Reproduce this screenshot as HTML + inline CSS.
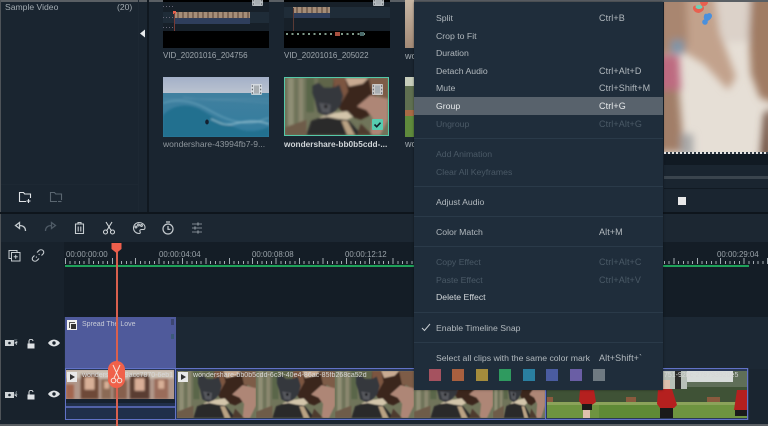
<!DOCTYPE html>
<html><head><meta charset="utf-8">
<style>
html,body{margin:0;padding:0;background:#1a2530}
#r{position:relative;width:768px;height:426px;overflow:hidden;background:#1a2530;font-family:"Liberation Sans",sans-serif;font-size:9px;color:#aeb6bc}
#r div,#r svg,#r span.a{position:absolute}
.t{white-space:nowrap;line-height:12px;filter:blur(.3px)}
.m{left:22px;white-space:nowrap;line-height:12px;color:#b2b9be;font-size:8.7px;filter:blur(.25px);margin-top:-.3px}
.s{left:185px;white-space:nowrap;line-height:12px;color:#b2b9be;font-size:9px;letter-spacing:.1px;filter:blur(.25px);margin-top:-.3px}
.l{left:0;width:249px;height:1px;background:#2a3a49}
.c{top:367px;width:12px;height:12px}
.ruler{top:249px;font-size:7.9px;color:#9aa3a9;white-space:nowrap;line-height:12px;filter:blur(.3px)}
</style></head><body>
<div id="r">
<svg width="0" height="0" style="left:0;top:0">
<defs>
<filter id="b1" x="-10%" y="-10%" width="120%" height="120%"><feGaussianBlur stdDeviation="1.100"/></filter>
<filter id="b4" x="-30%" y="-30%" width="160%" height="160%"><feGaussianBlur stdDeviation="4"/></filter>
<symbol id="dog" viewBox="0 0 106 60" preserveAspectRatio="none">
<rect width="106" height="60" fill="#70745a"/>
<g filter="url(#b1)">
<rect x="3" y="0" width="6" height="60" fill="#8f8e74"/>
<rect x="14" y="0" width="5" height="60" fill="#8a876e"/>
<rect x="22" y="0" width="8" height="36" fill="#5a664a"/>
<path d="M34 0h16l-4 20-12 6z" fill="#5f654a"/>
<path d="M50 0h44v36l-16 8-18-6-12-18z" fill="#3a281f"/>
<path d="M50 0h12l3 14-7 12-8-8z" fill="#7b5540"/>
<path d="M62 0h24l-6 6-14 3z" fill="#c8aa92"/>
<path d="M86 0h20v24l-10-6-6 0z" fill="#7d5c47"/>
<path d="M74 30l14-12 18 4v22l-8 16H88l2-18-6-8z" fill="#ae8676"/>
<path d="M0 52l22-8 0 16H0z" fill="#6e5c48"/>
<path d="M22 60l5-15 18-6 20 5 14 16z" fill="#2a292b"/>
<path d="M36 41l12-4 16-2 6 6-6 3-10-1-10-2-8 1z" fill="#d3c5aa"/>
<path d="M58 45l6 0 8 15H64z" fill="#b9a283"/>
<path d="M78 48l12 12H74z" fill="#4e3a2e"/>
<path d="M28 8l7-3 5 5 10 0 6-3 4 12-3 10-7 8-8 3-8-4-3-12-3-8z" fill="#35373d"/>
<path d="M35 26l12 2-1 9-8-1z" fill="#55565c"/>
<circle cx="42" cy="30" r="1.700" fill="#0c0c0c"/>
</g>
</symbol>
<symbol id="film" viewBox="0 0 11 11">
<rect width="11" height="11" rx="1" fill="#dfe3e6" opacity=".8"/>
<rect x="3" y="1.500" width="5" height="8" fill="#a8aeb2"/>
<g fill="#6a6f74"><rect x=".8" y="1.200" width="1.200" height="1.600"/><rect x=".8" y="4.700" width="1.200" height="1.600"/><rect x=".8" y="8.200" width="1.200" height="1.600"/><rect x="9" y="1.200" width="1.200" height="1.600"/><rect x="9" y="4.700" width="1.200" height="1.600"/><rect x="9" y="8.200" width="1.200" height="1.600"/></g>
</symbol>
<symbol id="girls" viewBox="0 0 110 28" preserveAspectRatio="none">
<rect width="110" height="28" fill="#b0978a"/>
<g filter="url(#b1)">
<rect y="0" width="110" height="8" fill="#cdc3b6"/>
<rect x="15" y="4" width="18" height="24" fill="#6e4a38"/><rect x="19" y="7" width="10" height="12" fill="#d8b097"/>
<rect x="36" y="9" width="10" height="19" fill="#8b6a55"/><rect x="39" y="11" width="5" height="7" fill="#d8b097"/>
<rect x="65" y="5" width="20" height="23" fill="#5a3c30"/><rect x="70" y="8" width="10" height="12" fill="#d9ae97"/>
<rect x="90" y="8" width="14" height="20" fill="#9a6c5a"/><rect x="94" y="10" width="6" height="8" fill="#d8b097"/>
<rect x="0" y="14" width="8" height="14" fill="#a3664f"/>
<rect x="48" y="10" width="14" height="18" fill="#86604e"/>
</g>
</symbol>
</defs>
</svg>

<!-- frame -->
<div style="left:0;top:0;width:768px;height:2px;background:#5a5f64"></div>
<div style="left:0;top:0;width:1px;height:426px;background:#4e5358"></div>

<!-- library panel -->
<div style="left:147px;top:0;width:2px;height:212px;background:#101820"></div>
<div style="left:1px;top:184px;width:137px;height:1px;background:#1d2833"></div>
<div style="left:138px;top:0;width:1px;height:212px;background:#1d2833"></div>
<div class="t" style="left:5px;top:1px;color:#a3abb1;font-size:8.600px">Sample Video</div>
<div class="t" style="left:117px;top:1px;color:#a3abb1;font-size:8.600px">(20)</div>
<svg style="left:139px;top:29px" width="7" height="9"><path d="M6 .5v8L1 4.500z" fill="#e8ebed"/></svg>
<svg style="left:18px;top:190px" width="14" height="14" fill="none" stroke="#dfe3e6" stroke-width="1.100"><path d="M8 11.500H1.500V2.500h4l1.200 1.500h5.800v4"/><path d="M10.500 9v4M8.500 11h4"/></svg>
<svg style="left:49px;top:190px" width="14" height="14" fill="none" stroke="#5a6670" stroke-width="1.100"><path d="M8 11.500H1.500V2.500h4l1.200 1.500h5.800v6"/><path d="M9 11.500h3.500"/></svg>

<!-- thumbnails top row -->
<div style="left:163px;top:0;width:106px;height:48px;background:#000">
 <div style="left:0;top:2px;width:106px;height:29px;background:#172029"></div>
 <div style="left:0;top:12px;width:106px;height:11px;background:#1f2c38"></div>
 <div style="left:11px;top:12px;width:76px;height:6px;background:repeating-linear-gradient(90deg,#a58d78 0 3px,#7d6656 3px 5px)"></div>
 <div style="left:11px;top:18px;width:76px;height:6px;background:#2f3e5c"></div>
 <div style="left:10px;top:11px;width:3px;height:3px;background:#e8604c"></div>
 <div style="left:11px;top:13px;width:1px;height:18px;background:#7a3b35"></div>
 <div style="left:0;top:6px;width:10px;height:1px;background:repeating-linear-gradient(90deg,#667 0 1px,transparent 1px 3px)"></div>
 <div style="left:0;top:17px;width:10px;height:1px;background:repeating-linear-gradient(90deg,#667 0 1px,transparent 1px 3px)"></div>
 <div style="left:0;top:27px;width:10px;height:1px;background:repeating-linear-gradient(90deg,#667 0 1px,transparent 1px 3px)"></div>
</div>
<svg style="left:252px;top:0" width="11" height="6"><use href="#film" y="-5" width="11" height="11"/></svg>
<div style="left:284px;top:0;width:106px;height:48px;background:#000">
 <div style="left:0;top:2px;width:106px;height:29px;background:#172029"></div>
 <div style="left:0;top:7px;width:106px;height:11px;background:#1f2c38"></div>
 <div style="left:9px;top:7px;width:37px;height:6px;background:repeating-linear-gradient(90deg,#a58d78 0 3px,#7d6656 3px 5px)"></div>
 <div style="left:9px;top:13px;width:37px;height:5px;background:#2f3e5c"></div>
 <div style="left:9px;top:8px;width:1px;height:23px;background:#5a3a35"></div>
 <div style="left:2px;top:33px;width:80px;height:2px;background:repeating-linear-gradient(90deg,#7f9a8a 0 2px,transparent 2px 5.500px)"></div>
 <div style="left:51px;top:32px;width:5px;height:4px;background:#a8503f"></div>
 <div style="left:76px;top:32px;width:4px;height:4px;background:#4a6a6a"></div>
</div>
<svg style="left:373px;top:0" width="11" height="6"><use href="#film" y="-5" width="11" height="11"/></svg>
<div class="t" style="left:163px;top:49.500px;color:#a0a8ae;font-size:8px">VID_20201016_204756</div>
<div class="t" style="left:284px;top:49.500px;color:#a0a8ae;font-size:8px">VID_20201016_205022</div>

<!-- third column sliver -->
<div style="left:405px;top:0;width:9px;height:48px;background:linear-gradient(#c7b6a4,#a38a76)"></div>
<div class="t" style="left:405px;top:49.500px;width:9px;overflow:hidden;color:#a0a8ae">wo</div>
<div style="left:405px;top:77px;width:9px;height:60px;background:linear-gradient(#c7cdbb 0 15%,#5f6f50 15% 55%,#a86a45 55% 65%,#5f8a3c 65%)"></div>
<div class="t" style="left:405px;top:138px;width:9px;overflow:hidden;color:#a0a8ae">wo</div>

<!-- ocean thumb -->
<svg style="left:163px;top:77px" width="106" height="60" viewBox="0 0 106 60">
<defs><linearGradient id="sky" x1="0" y1="0" x2="0" y2="1"><stop offset="0" stop-color="#a3b0c8"/><stop offset="1" stop-color="#bcc4d0"/></linearGradient>
<linearGradient id="sea" x1="0" y1="0" x2="0" y2="1"><stop offset="0" stop-color="#41809f"/><stop offset="1" stop-color="#327c9e"/></linearGradient></defs>
<rect width="106" height="17" fill="url(#sky)"/><rect y="16" width="106" height="44" fill="url(#sea)"/>
<g filter="url(#b1)">
<path d="M0 38C12 26 28 26 42 35s24 13 34 17 20 2 30-2v10H0z" fill="#21708f"/>
<path d="M0 26c14-4 26-2 36 2s22 14 40 17 20-2 30-4" fill="none" stroke="#6ea6bd" stroke-width="1.400" opacity=".7"/>
<path d="M48 42c8 3 12 7 22 5s20-5 36 0" fill="none" stroke="#a9cfdc" stroke-width="1.500" opacity=".7"/>
<path d="M0 22h106M20 20c20 4 40 2 86 6" fill="none" stroke="#5c93ae" stroke-width="1" opacity=".6"/>
</g>
<ellipse cx="44" cy="45" rx="1.800" ry="2.500" fill="#142030"/>
</svg>
<svg style="left:251px;top:84px" width="11" height="11"><use href="#film" width="11" height="11"/></svg>
<div class="t" style="left:163px;top:138px;color:#8f979d;font-size:8.500px">wondershare-43994fb7-9...</div>

<!-- dog thumb -->
<div style="left:284px;top:77px;width:103px;height:57px;border:1.500px solid #55c9a8;overflow:hidden">
<svg style="left:0;top:0" width="103" height="57"><use href="#dog" width="103" height="57"/></svg>
</div>
<svg style="left:372px;top:84px" width="11" height="11"><use href="#film" width="11" height="11"/></svg>
<div style="left:372px;top:119px;width:11px;height:11px;background:#57cdb0;border-radius:1px"></div>
<svg style="left:372px;top:119px" width="11" height="11" fill="none" stroke="#10202a" stroke-width="1.600"><path d="M2.500 5.500l2.200 2.200 3.800-4"/></svg>
<div class="t" style="left:284px;top:138px;color:#d0d5d8;font-size:8.300px;font-weight:bold">wondershare-bb0b5cdd-...</div>

<!-- preview -->
<div style="left:664px;top:2px;width:104px;height:150px;overflow:hidden;background:#e6dfd6">
<svg style="left:0;top:0" width="104" height="150" viewBox="0 0 104 150">
<rect width="104" height="150" fill="#e6dfd6"/>
<g filter="url(#b4)">
<path d="M48-10h50v50H60z" fill="#dcd2c9"/>
<path d="M-10-10H50L56 31 72 75 64 88 40 62 20 50H-10z" fill="#c2a28c"/>
<path d="M-10-10H22L24 40 20 52H-10z" fill="#a9866f"/>
<path d="M87-10h27v110l-6 0-12-4-9-24-2-40z" fill="#a07b63"/>
<path d="M-10 88H15L20 150H-10z" fill="#a17e68"/>
<path d="M-10 53H15L17 88H-10z" fill="#bd6a80"/>
<path d="M7 38h13v14H7z" fill="#7f95a8"/>
<path d="M17 132h12v22H17z" fill="#a8a8a8"/>
<path d="M100 112l8-6v50h-12z" fill="#6e5040"/>
</g>
<path d="M34 5c2-3 6-2 6 1s-3 4-5 5c-3 0-6-2-6-5s3-3 5-1z" fill="#e8604f"/>
<ellipse cx="35" cy="5" rx="3.500" ry="2" fill="#6fd0b6"/>
<path d="M43 12c3-2 5 0 5 2s-3 5-5 5c-2 0-4-3-3-5 0-2 2-3 3-2z" fill="#4a90dd"/>
<circle cx="41" cy="20" r="2.800" fill="#4a90dd"/>
<circle cx="40" cy="0" r="4" fill="#e8604f"/>
</svg>
</div>
<div style="left:664px;top:152px;width:104px;height:1.500px;background:repeating-linear-gradient(90deg,#e6e6e6 0 2px,#303a44 2px 4px)"></div>
<div style="left:664px;top:154px;width:104px;height:11px;background:#111a23"></div>
<div style="left:664px;top:176px;width:104px;height:3px;background:#3a444d"></div>
<div style="left:664px;top:188px;width:104px;height:1px;background:#111a23"></div>
<div style="left:678px;top:197px;width:8px;height:8px;background:#e8e8e8"></div>

<!-- timeline chrome -->
<div style="left:0;top:212px;width:768px;height:2px;background:#0e151c"></div>
<div style="left:1px;top:214px;width:767px;height:28px;background:#1c2732"></div>
<div style="left:1px;top:242px;width:767px;height:75px;background:#141d26"></div>
<div style="left:1px;top:242px;width:63px;height:178px;background:#18222c"></div>
<div style="left:1px;top:317px;width:767px;height:52px;background:#1c2834"></div>
<div style="left:1px;top:369px;width:767px;height:51px;background:#1a2530"></div>
<div style="left:1px;top:317px;width:63px;height:103px;background:#18222c"></div>
<div style="left:0;top:420px;width:768px;height:4px;background:#1a2530"></div>
<div style="left:0;top:424px;width:768px;height:2px;background:#5a5f64"></div>

<!-- toolbar icons -->
<svg style="left:14px;top:220px" width="14" height="14" fill="none" stroke="#c6ccd0" stroke-width="1.300"><path d="M1.500 5.500L5.500 2.500v6zM5 5.500c4 0 6.500 1.500 6.500 5.500"/></svg>
<svg style="left:43px;top:220px" width="14" height="14" fill="none" stroke="#4f5b66" stroke-width="1.300"><path d="M12.500 5.500L8.500 2.500v6zM9 5.500c-4 0-6.500 1.500-6.500 5.500"/></svg>
<svg style="left:73px;top:221px" width="13" height="14" fill="none" stroke="#c6ccd0" stroke-width="1.100"><path d="M2 3h9M5 3V1.500h3V3M2.500 3v9.500h8V3M5.200 5.500v5M7.800 5.500v5"/></svg>
<svg style="left:102px;top:221px" width="14" height="14" fill="none" stroke="#d2d7da" stroke-width="1.100"><path d="M4 1l5.500 9M10 1L4.500 10"/><circle cx="3.500" cy="11" r="2"/><circle cx="10.500" cy="11" r="2"/></svg>
<svg style="left:132px;top:221px" width="14" height="14" fill="none" stroke="#c6ccd0" stroke-width="1.100"><path d="M7 1.500a5.500 5.500 0 1 0 0 11c1.500 0 1.500-1.200 1-2-.5-1 0-2 1.500-2h2c1 0 1.500-1 1.500-2C13 3.500 10 1.500 7 1.500z"/><circle cx="4" cy="6" r=".9"/><circle cx="6.500" cy="4" r=".9"/><circle cx="9.500" cy="4.500" r=".9"/></svg>
<svg style="left:161px;top:221px" width="14" height="14" fill="none" stroke="#c6ccd0" stroke-width="1.200"><circle cx="7" cy="8" r="5"/><path d="M5 1h4M7 5v3.300h2.500"/></svg>
<svg style="left:190px;top:222px" width="14" height="12" fill="none" stroke="#7b858d" stroke-width="1"><path d="M2 2h10M2 6h10M2 10h10"/><path d="M8 .5v3M5 4.500v3M8 8.500v3" stroke-width="1.600"/></svg>

<!-- timeline left tools -->
<svg style="left:8px;top:249px" width="13" height="13" fill="none" stroke="#c6ccd0" stroke-width="1"><path d="M3 9.500H1V1.500h8v2"/><rect x="3.500" y="3.500" width="8.500" height="8.500"/><path d="M7.700 5.700v4M5.700 7.700h4"/></svg>
<svg style="left:31px;top:249px" width="14" height="13" fill="none" stroke="#c6ccd0" stroke-width="1.100"><path d="M6 3.500l2-2c1-1 3-1 4 0s1 2.500 0 3.500l-1.500 1.500M8 9.500l-2 2c-1 1-3 1-4 0s-1-2.500 0-3.500l1.500-1.500M5 8.500l.8-.8M8.500 5l-.8.8"/></svg>

<!-- ruler -->
<div class="ruler" style="left:66px">00:00:00:00</div>
<div class="ruler" style="left:159px">00:00:04:04</div>
<div class="ruler" style="left:252px">00:00:08:08</div>
<div class="ruler" style="left:345px">00:00:12:12</div>
<div class="ruler" style="left:717px">00:00:29:04</div>
<div style="left:65px;top:261px;width:703px;height:3px;background:repeating-linear-gradient(90deg,#a4adb3 0 1px,transparent 1px 4.680px)"></div>
<div style="left:65px;top:258px;width:703px;height:6px;background:repeating-linear-gradient(90deg,#a4adb3 0 1px,transparent 1px 23.400px)"></div>
<div style="left:65px;top:265px;width:684px;height:2px;background:#1fa15a"></div>

<!-- track heads -->
<svg style="left:5px;top:339px" width="13" height="8"><path d="M0 1h9v6H0zM9 4l3-2v4z" fill="#cfd4d7"/><circle cx="4.500" cy="4" r="1.300" fill="#18222c"/></svg>
<div class="t" style="left:14px;top:337px;color:#6f7a82;font-size:7px">5</div>
<svg style="left:26px;top:339px" width="10" height="10"><path d="M1.500 4.500h7v5h-7z" fill="#dfe3e6"/><path d="M3 4.500V2.500a2 2 0 0 1 4-.4" fill="none" stroke="#dfe3e6"/></svg>
<svg style="left:48px;top:339px" width="12" height="8"><path d="M0 4c3-4.500 9-4.500 12 0-3 4.500-9 4.500-12 0z" fill="#dfe3e6"/><circle cx="6" cy="4" r="1.700" fill="#18222c"/></svg>
<svg style="left:5px;top:391px" width="13" height="8"><path d="M0 1h9v6H0zM9 4l3-2v4z" fill="#cfd4d7"/><circle cx="4.500" cy="4" r="1.300" fill="#18222c"/></svg>
<div class="t" style="left:14px;top:389px;color:#6f7a82;font-size:7px">4</div>
<svg style="left:26px;top:390px" width="10" height="10"><path d="M1.500 4.500h7v5h-7z" fill="#dfe3e6"/><path d="M3 4.500V2.500a2 2 0 0 1 4-.4" fill="none" stroke="#dfe3e6"/></svg>
<svg style="left:48px;top:390px" width="12" height="8"><path d="M0 4c3-4.500 9-4.500 12 0-3 4.500-9 4.500-12 0z" fill="#dfe3e6"/><circle cx="6" cy="4" r="1.700" fill="#18222c"/></svg>

<!-- title clip -->
<div style="left:65px;top:317px;width:111px;height:52px;background:#4f5a9b"></div>
<div style="left:67px;top:320px;width:10px;height:10px;background:#f1f1f1"></div>
<div style="left:69px;top:322px;width:5px;height:5px;border:1px solid #555;border-right:none;border-bottom:none"></div>
<div style="left:71px;top:324px;width:5px;height:5px;background:#333"></div>
<div class="t" style="left:82px;top:319px;color:#c6cad6;font-size:7px">Spread The Love</div>
<div style="left:171px;top:319px;width:3px;height:6px;background:#3c4670"></div>
<div style="left:171px;top:334px;width:3px;height:5px;background:#3c5a7a"></div>

<!-- video clips -->
<div style="left:65px;top:368px;width:684px;height:52px;background:#2a3858"></div>
<svg style="left:66px;top:370px" width="108" height="29"><use href="#girls" width="108" height="29"/></svg>
<div style="left:66px;top:399px;width:109px;height:20px;background:#202f4a"></div>
<div style="left:66px;top:399px;width:109px;height:4px;background:#17222f"></div>
<div style="left:66px;top:406px;width:109px;height:1.500px;background:#5162a8"></div>
<svg style="left:177px;top:371px" width="368" height="47">
<use href="#dog" x="0" width="79" height="47"/><use href="#dog" x="79" width="79" height="47"/><use href="#dog" x="158" width="79" height="47"/><use href="#dog" x="237" width="79" height="47"/><use href="#dog" x="316" width="52" height="47"/>
</svg>
<svg style="left:547px;top:371px" width="200" height="47" viewBox="0 0 200 47">
<rect width="200" height="47" fill="#6e9440"/>
<rect width="200" height="31" fill="#3f5236"/><rect y="0" width="200" height="16" fill="#5f6e58"/>
<rect x="104" y="0" width="36" height="18" fill="#b8c0b8"/><rect x="128" y="0" width="6" height="18" fill="#2b2c2a"/><rect x="140" y="0" width="46" height="11" fill="#d8dcda"/>
<rect y="31" width="200" height="3" fill="#8ba35a"/>
<rect x="52" y="34" width="62" height="13" fill="#5f8a36"/>
<rect x="0" y="26" width="6" height="5" fill="#8a5a3e"/><rect x="79" y="26" width="10" height="5" fill="#8a5a3e"/><rect x="160" y="26" width="13" height="5" fill="#8a5a3e"/>
<path d="M33 19h14l2 12-4 3H35l-3-4z" fill="#b5201f"/><rect x="35" y="33" width="10" height="6" fill="#1a1a1a"/><rect x="36" y="39" width="7" height="8" fill="#e0c0ad"/>
<path d="M111 18h14l5 16-3 3h-14l-3-4z" fill="#b5201f"/><rect x="113" y="37" width="13" height="10" fill="#1a1a1a"/><rect x="115" y="9" width="8" height="9" fill="#dcc0ad"/>
<path d="M190 19h10v20h-13z" fill="#b5201f"/><rect x="188" y="39" width="12" height="6" fill="#1a1a1a"/>
</svg>
<!-- clip borders -->
<div style="left:65px;top:368px;width:109px;height:50px;border:1.500px solid #6172c6"></div>
<div style="left:175px;top:368px;width:369px;height:50px;border:1.500px solid #6172c6"></div>
<div style="left:545px;top:368px;width:201px;height:50px;border:1.500px solid #6172c6"></div>

<div style="left:67px;top:372px;width:10px;height:10px;background:#e9e9e9"></div>
<svg style="left:67px;top:372px" width="10" height="10"><path d="M3 2l5 3-5 3z" fill="#333"/></svg>
<div class="t" style="left:82px;top:370px;color:#d6d6d6;font-size:7px;width:92px;overflow:hidden">wondershare-9acc7870-6eb1</div>
<div style="left:178px;top:372px;width:10px;height:10px;background:#e9e9e9"></div>
<svg style="left:178px;top:372px" width="10" height="10"><path d="M3 2l5 3-5 3z" fill="#333"/></svg>
<div class="t" style="left:193px;top:370px;color:#d6d6d6;font-size:7px;letter-spacing:.05px">wondershare-bb0b5cdd-6c3f-40e4-86ac-85fb268ca52d</div>
<div class="t" style="left:664px;top:370px;color:#d6d6d6;font-size:7px;width:84px;overflow:hidden">751-92bc-278793920e5</div>

<!-- playhead -->
<div style="left:116px;top:252px;width:2px;height:174px;background:#d9604e"></div>
<svg style="left:111px;top:243px" width="11" height="10"><path d="M.5 0h10v6l-5 4-5-4z" fill="#ee5f4c"/></svg>
<div style="left:108px;top:361px;width:17px;height:27px;border-radius:8.500px;background:#f0614a"></div>
<svg style="left:110px;top:363px" width="13" height="23" fill="none" stroke="#f5e3da" stroke-width="1"><path d="M3 2l6 13M10 2L4 15"/><circle cx="3.500" cy="17.500" r="2.300"/><circle cx="9.500" cy="17.500" r="2.300"/></svg>

<!-- context menu -->
<div style="left:414px;top:2px;width:249px;height:388px;background:#1f2d3b;box-shadow:0 0 2px rgba(0,0,0,.5)">
 <div style="left:0;top:95px;width:249px;height:18px;background:#58626c"></div>
 <div class="m" style="top:10px">Split</div><div class="s" style="top:10px">Ctrl+B</div>
 <div class="m" style="top:28px">Crop to Fit</div>
 <div class="m" style="top:45px">Duration</div>
 <div class="m" style="top:63px">Detach Audio</div><div class="s" style="top:63px">Ctrl+Alt+D</div>
 <div class="m" style="top:80px">Mute</div><div class="s" style="top:80px">Ctrl+Shift+M</div>
 <div class="m" style="top:98px;color:#e6e9eb">Group</div><div class="s" style="top:98px;color:#e6e9eb">Ctrl+G</div>
 <div class="m" style="top:116px;color:#4a5966">Ungroup</div><div class="s" style="top:116px;color:#4a5966">Ctrl+Alt+G</div>
 <div class="l" style="top:136px"></div>
 <div class="m" style="top:146px;color:#4a5966">Add Animation</div>
 <div class="m" style="top:164px;color:#4a5966">Clear All Keyframes</div>
 <div class="l" style="top:184px"></div>
 <div class="m" style="top:194px">Adjust Audio</div>
 <div class="l" style="top:214px"></div>
 <div class="m" style="top:224px">Color Match</div><div class="s" style="top:224px">Alt+M</div>
 <div class="l" style="top:244px"></div>
 <div class="m" style="top:254px;color:#4a5966">Copy Effect</div><div class="s" style="top:254px;color:#4a5966">Ctrl+Alt+C</div>
 <div class="m" style="top:272px;color:#4a5966">Paste Effect</div><div class="s" style="top:272px;color:#4a5966">Ctrl+Alt+V</div>
 <div class="m" style="top:289px;color:#d3d7da">Delete Effect</div>
 <div class="l" style="top:310px"></div>
 <svg style="left:7px;top:321px" width="10" height="9" fill="none" stroke="#c6ccd0" stroke-width="1"><path d="M1 5l2.500 2.500L9 1"/></svg>
 <div class="m" style="top:320px">Enable Timeline Snap</div>
 <div class="l" style="top:340px"></div>
 <div class="m" style="top:350px">Select all clips with the same color mark</div><div class="s" style="top:350px">Alt+Shift+`</div>
 <div class="c" style="left:15px;background:#a5525f"></div>
 <div class="c" style="left:38px;background:#a8603f"></div>
 <div class="c" style="left:62px;background:#a58c3c"></div>
 <div class="c" style="left:85px;background:#2f9a5f"></div>
 <div class="c" style="left:109px;background:#2a7fa0"></div>
 <div class="c" style="left:132px;background:#4a5ca0"></div>
 <div class="c" style="left:156px;background:#6a5ea5"></div>
 <div class="c" style="left:179px;background:#6f7a82"></div>
</div>
</div>
</body></html>
